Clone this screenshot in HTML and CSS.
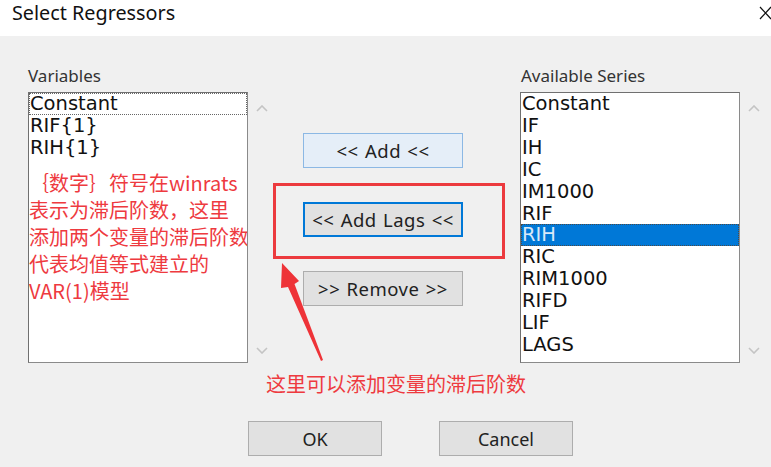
FILE: index.html
```html
<!DOCTYPE html>
<html lang="en">
<head>
    <meta charset="UTF-8">
    <title>Select Regressors</title>
    <link rel="stylesheet" href="styles.css">
</head>
<body>
    <div class="titlebar">
        <span class="titlebar__title">Select Regressors</span>
        <svg class="titlebar__close" width="12" height="14" viewBox="0 0 12 14">
            <path d="M1 1 L12 13 M12 1 L1 13" stroke="#111" stroke-width="1.2" fill="none"/>
        </svg>
    </div>

    <div class="dialog">
        <div class="dialog__main">
            <div class="column">
                <div class="column__label">Variables</div>
                <div class="listbox">
                    <div class="listbox__item listbox__item--focus">Constant</div>
                    <div class="listbox__item">RIF{1}</div>
                    <div class="listbox__item">RIH{1}</div>
                    <p class="note">｛数字｝符号在winrats<br>表示为滞后阶数，这里<br>添加两个变量的滞后阶数<br>代表均值等式建立的<br>VAR(1)模型</p>
                </div>
            </div>
            <div class="scroll">
                <svg width="12" height="7" viewBox="0 0 12 7"><path d="M1 6 L6 1 L11 6" stroke="#c4c4c4" stroke-width="1.6" fill="none"/></svg>
                <svg width="12" height="7" viewBox="0 0 12 7"><path d="M1 1 L6 6 L11 1" stroke="#c4c4c4" stroke-width="1.6" fill="none"/></svg>
            </div>

            <div class="actions">
                <button class="btn btn--wide btn--hover">&lt;&lt; Add &lt;&lt;</button>
                <button class="btn btn--wide btn--default">&lt;&lt; Add Lags &lt;&lt;</button>
                <button class="btn btn--wide">&gt;&gt; Remove &gt;&gt;</button>
            </div>

            <div class="column column--right">
                <div class="column__label">Available Series</div>
                <div class="listbox">
                    <div class="listbox__item">Constant</div>
                    <div class="listbox__item">IF</div>
                    <div class="listbox__item">IH</div>
                    <div class="listbox__item">IC</div>
                    <div class="listbox__item">IM1000</div>
                    <div class="listbox__item">RIF</div>
                    <div class="listbox__item listbox__item--selected">RIH</div>
                    <div class="listbox__item">RIC</div>
                    <div class="listbox__item">RIM1000</div>
                    <div class="listbox__item">RIFD</div>
                    <div class="listbox__item">LIF</div>
                    <div class="listbox__item">LAGS</div>
                </div>
            </div>
            <div class="scroll">
                <svg width="12" height="7" viewBox="0 0 12 7"><path d="M1 6 L6 1 L11 6" stroke="#c4c4c4" stroke-width="1.6" fill="none"/></svg>
                <svg width="12" height="7" viewBox="0 0 12 7"><path d="M1 1 L6 6 L11 1" stroke="#c4c4c4" stroke-width="1.6" fill="none"/></svg>
            </div>
        </div>

        <p class="hint">这里可以添加变量的滞后阶数</p>

        <div class="footer">
            <button class="btn btn--footer">OK</button>
            <button class="btn btn--footer">Cancel</button>
        </div>

        <!-- annotation overlay -->
        <div class="callout"></div>
        <svg class="arrow" width="60" height="110" viewBox="0 0 60 110">
            <polygon points="12,5 29,23 24.5,26 53,102 51,103 18,29 11,30" fill="#ee3338"/>
        </svg>
    </div>
</body>
</html>
```

FILE: styles.css
```css
body {
    margin: 0;
    width: 771px;
    height: 467px;
    overflow: hidden;
    background-color: #f0f0f0;
    font-family: 'Noto Sans', sans-serif;
    color: #222;
}

.titlebar {
    height: 36px;
    background-color: #fff;
    display: flex;
    justify-content: space-between;
    align-items: flex-start;
    padding-left: 12px;
}

.titlebar__title {
    font-size: 19.8px;
    line-height: 26px;
    color: #111;
}

.titlebar__close {
    margin-top: 6px;
}

.dialog {
    position: relative;
    padding: 30px 0 0 28px;
}

.dialog__main {
    display: flex;
    align-items: flex-start;
}

.column {
    width: 220px;
}

.column--right {
    margin-left: 57px;
}

.column__label {
    font-size: 17px;
    line-height: 20px;
    margin-bottom: 6px;
    color: #333;
}

.column--right .column__label {
    padding-left: 1px;
}

.listbox {
    box-sizing: border-box;
    height: 271px;
    background-color: #fff;
    border: 1px solid #8a8a8a;
    border-top-color: #707070;
    border-left-color: #707070;
    font-family: 'DejaVu Sans', sans-serif;
    font-size: 19.5px;
    overflow: hidden;
}

.listbox__item {
    line-height: 21.9px;
    padding-left: 1px;
    color: #111;
    white-space: nowrap;
}

.listbox__item--focus {
    outline: 1px dotted #666;
    outline-offset: -1px;
}

.listbox__item--selected {
    background-color: #0078d7;
    color: #d8e8f8;
    outline: 1px dotted #4a4a4a;
    outline-offset: -1px;
}

.note {
    margin: 10px 0 0 0;
    font-family: 'Noto Sans CJK SC', sans-serif;
    font-size: 20px;
    line-height: 27px;
    color: #ee3a3f;
    white-space: nowrap;
}

.scroll {
    box-sizing: border-box;
    width: 28px;
    height: 271px;
    margin-top: 26px;
    padding: 13px 0 9px;
    display: flex;
    flex-direction: column;
    justify-content: space-between;
    align-items: center;
}

.actions {
    width: 160px;
    margin-left: 27px;
    padding-top: 67px;
    display: flex;
    flex-direction: column;
    gap: 34px;
}

.btn {
    box-sizing: border-box;
    height: 35px;
    padding: 0;
    font-family: 'Noto Sans', sans-serif;
    font-size: 18px;
    color: #222;
    background-color: #e1e1e1;
    border: 1px solid #adadad;
}

.btn--wide {
    font-size: 18.5px;
    word-spacing: 1px;
    letter-spacing: 0.5px;
}

.btn--hover {
    background-color: #e5eef8;
    border-color: #8cb8e4;
}

.btn--default {
    border: 2px solid #0078d7;
}

.hint {
    margin: 7px 0 0 238px;
    font-family: 'Noto Sans CJK SC', sans-serif;
    font-size: 20px;
    line-height: 27px;
    color: #ee3a3f;
}

.footer {
    margin: 24px 0 0 220px;
    display: flex;
    gap: 57px;
}

.btn--footer {
    width: 134px;
}

.callout {
    position: absolute;
    left: 273px;
    top: 147px;
    width: 232px;
    height: 76px;
    box-sizing: border-box;
    border: 3px solid #ec3a3e;
}

.arrow {
    position: absolute;
    left: 270px;
    top: 222px;
}
```
